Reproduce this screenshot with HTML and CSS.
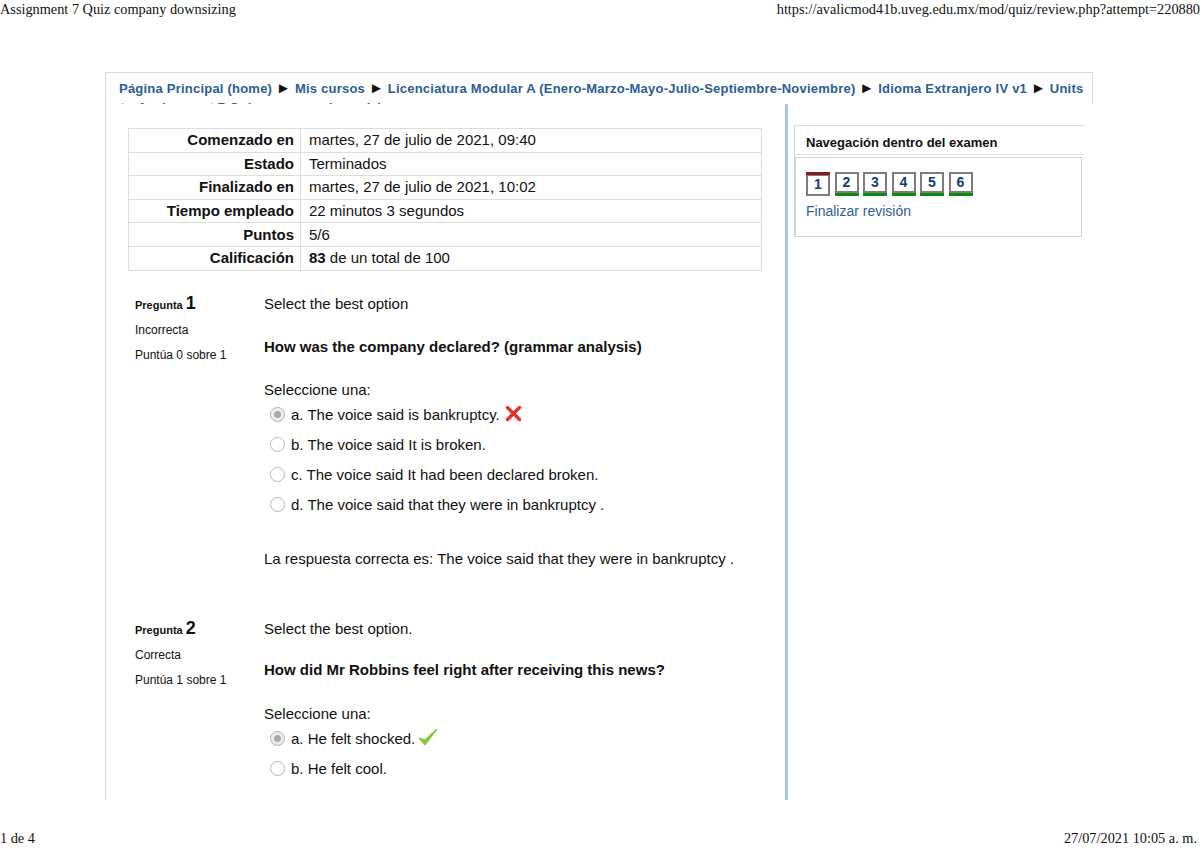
FILE: index.html
```html
<!DOCTYPE html>
<html lang="es">
<head>
<meta charset="utf-8">
<title>Assignment 7 Quiz company downsizing</title>
<link rel="stylesheet" href="styles.css">
</head>
<body>
<div class="print-head">
  <span>Assignment 7 Quiz company downsizing</span>
  <span class="url">https://avalicmod41b.uveg.edu.mx/mod/quiz/review.php?attempt=220880</span>
</div>

<div class="page">
  <div class="crumbs-wrap">
    <div class="crumbs">
      <a>Página Principal (home)</a> <span class="sep">►</span> <a>Mis cursos</a> <span class="sep">►</span> <a>Licenciatura Modular A (Enero-Marzo-Mayo-Julio-Septiembre-Noviembre)</a> <span class="sep">►</span> <a>Idioma Extranjero IV v1</a> <span class="sep">►</span> <a>Units</a> <span class="last"><span class="sep">►</span> <a>Assignment 7 Quiz company downsizing</a></span>
    </div>
  </div>

  <div class="content">
    <div class="main">
      <table class="summary">
        <tr><th>Comenzado en</th><td>martes, 27 de julio de 2021, 09:40</td></tr>
        <tr><th>Estado</th><td>Terminados</td></tr>
        <tr><th>Finalizado en</th><td>martes, 27 de julio de 2021, 10:02</td></tr>
        <tr><th>Tiempo empleado</th><td>22 minutos 3 segundos</td></tr>
        <tr><th>Puntos</th><td>5/6</td></tr>
        <tr><th>Calificación</th><td><b>83</b> de un total de 100</td></tr>
      </table>

      <div class="question q1">
        <div class="info">
          <div class="qno">Pregunta <span class="num">1</span></div>
          <div class="state">Incorrecta</div>
          <div class="grade">Puntúa 0 sobre 1</div>
        </div>
        <div class="formulation">
          <div class="qtext">Select the best option</div>
          <div class="qbold">How was the company declared? (grammar analysis)</div>
          <div class="prompt">Seleccione una:</div>
          <div class="answers">
            <div class="opt"><span class="radio checked"></span><span>a. The voice said is bankruptcy.</span>
              <svg class="mark" width="17" height="17" viewBox="0 0 17 17"><path d="M2.5 2.5 L14.5 14.5 M14.5 2.5 L2.5 14.5" stroke="#e8322e" stroke-width="3.4" stroke-linecap="round" fill="none"/></svg>
            </div>
            <div class="opt"><span class="radio"></span><span>b. The voice said It is broken.</span></div>
            <div class="opt"><span class="radio"></span><span>c. The voice said It had been declared broken.</span></div>
            <div class="opt"><span class="radio"></span><span>d. The voice said that they were in bankruptcy .</span></div>
          </div>
          <div class="right-answer">La respuesta correcta es: The voice said that they were in bankruptcy .</div>
        </div>
      </div>

      <div class="question q2">
        <div class="info">
          <div class="qno">Pregunta <span class="num">2</span></div>
          <div class="state">Correcta</div>
          <div class="grade">Puntúa 1 sobre 1</div>
        </div>
        <div class="formulation">
          <div class="qtext">Select the best option.</div>
          <div class="qbold">How did Mr Robbins feel right after receiving this news?</div>
          <div class="prompt">Seleccione una:</div>
          <div class="answers">
            <div class="opt"><span class="radio checked"></span><span>a. He felt shocked.</span>
              <svg class="mark check" width="20" height="19" viewBox="0 0 20 19"><path d="M1.5 10.5 L7 16.5 L18.5 1.5 L7 12 Z" fill="#8cc63f" stroke="#8cc63f" stroke-width="1.5" stroke-linejoin="round"/></svg>
            </div>
            <div class="opt"><span class="radio"></span><span>b. He felt cool.</span></div>
          </div>
        </div>
      </div>
    </div>

    <div class="side">
      <div class="block">
        <div class="block-head">Navegación dentro del examen</div>
        <div class="block-body">
          <div class="navbtns">
            <span class="qbtn wrong"><span>1</span></span>
            <span class="qbtn ok"><span>2</span></span>
            <span class="qbtn ok"><span>3</span></span>
            <span class="qbtn ok"><span>4</span></span>
            <span class="qbtn ok"><span>5</span></span>
            <span class="qbtn ok"><span>6</span></span>
          </div>
          <a class="finish">Finalizar revisión</a>
        </div>
      </div>
    </div>
  </div>
</div>

<div class="print-foot">
  <span>1 de 4</span>
  <span class="date">27/07/2021 10:05 a. m.</span>
</div>
</body>
</html>
```

FILE: styles.css
```css
html, body {
  margin: 0;
  padding: 0;
  background: #fff;
}
body {
  width: 1200px;
  height: 848px;
  overflow: hidden;
  font-family: "Liberation Sans", Arial, sans-serif;
  color: #111;
}

.print-head, .print-foot {
  font-family: "Liberation Serif", "Times New Roman", serif;
  font-size: 14.3px;
  color: #111;
  display: flex;
  justify-content: space-between;
  white-space: nowrap;
  height: 20px;
  line-height: 20px;
}
.print-head { margin-top: -1px; }
.print-foot {
  margin-top: 28px;
  padding-right: 3px;
}

.page {
  margin: 53px 0 0 105px;
  width: 988px;
  height: 728px;
  border-top: 1px solid #dcd9cf;
  border-left: 1px solid #dcd9cf;
  box-sizing: border-box;
  display: flex;
  flex-direction: column;
}

.crumbs-wrap {
  height: 31px;
  border-right: 1px solid #dcd9cf;
  overflow: hidden;
  padding: 6px 0 0 13px;
  box-sizing: border-box;
}
.crumbs {
  width: 975px;
  font-size: 13px;
  font-weight: bold;
  line-height: 18px;
  letter-spacing: 0.22px;
  color: #2a5d96;
}
.crumbs a { color: #2a5d96; }
.crumbs .sep { color: #111; font-size: 15px; }
.crumbs .last { white-space: nowrap; }

.content {
  flex: 1;
  display: flex;
}

.main {
  width: 657px;
  border-right: 3px solid #a8c5e0;
  padding: 24px 0 0 22px;
}

.summary {
  width: 634px;
  border-collapse: collapse;
  font-size: 15px;
}
.summary th, .summary td {
  border: 1px solid #dedede;
  height: 22.6px;
  padding: 0;
  line-height: 22px;
}
.summary th {
  width: 165px;
  text-align: right;
  padding-right: 6px;
  font-weight: bold;
}
.summary td {
  padding-left: 8px;
}

.question {
  display: flex;
}
.q1 { margin-top: 20px; }
.q2 { margin-top: 47px; }

.info {
  width: 136px;
  flex: none;
  padding-left: 7px;
  box-sizing: border-box;
  font-size: 12px;
  line-height: 25px;
}
.qno { font-weight: bold; font-size: 11px; }
.qno .num { font-size: 18px; }

.formulation {
  font-size: 15px;
  line-height: 20px;
}
.qtext { margin-top: 2px; line-height: 22px; }
.qbold { font-weight: bold; margin-top: 22px; }
.prompt { margin-top: 23px; }
.q2 .qbold { margin-top: 20px; }
.q2 .prompt { margin-top: 24px; }

.answers {
  padding-left: 6px;
}
.opt {
  height: 30px;
  display: flex;
  align-items: center;
}
.radio {
  width: 13px;
  height: 13px;
  border: 1px solid #b9b9b9;
  border-radius: 50%;
  background: #fff;
  margin-right: 6px;
  position: relative;
  flex: none;
}
.radio.checked {
  background: #eee;
  border-color: #b0b0b0;
}
.radio.checked::after {
  content: "";
  position: absolute;
  left: 3px;
  top: 3px;
  width: 7px;
  height: 7px;
  border-radius: 50%;
  background: #a9a9a9;
}
.mark { margin-left: 5px; margin-top: -3px; }
.mark.check { margin-left: 3px; margin-top: -3px; }

.right-answer { margin-top: 29px; }

.side {
  padding: 21px 0 0 6px;
}
.block {
  width: 289px;
  border-top: 1px solid #dcdcdc;
  border-left: 1px solid #d2d2d2;
}
.block-head {
  height: 28px;
  line-height: 33px;
  padding-left: 11px;
  font-size: 13px;
  font-weight: bold;
  border-bottom: 1px solid #dddddd;
}
.block-body {
  margin-top: 2px;
  height: 80px;
  border: 1px solid #d2d2d2;
  border-left-width: 2px;
  margin-left: -1px;
  padding: 14px 0 0 10px;
  box-sizing: border-box;
  width: 288px;
}
.navbtns {
  display: flex;
  gap: 4.5px;
}
.qbtn {
  width: 24px;
  height: 24px;
  box-sizing: border-box;
  display: flex;
  flex-direction: column;
}
.qbtn span {
  flex: 1;
  border: 2px solid #7d7d7d;
  background: #fff;
  color: #123e70;
  font-weight: bold;
  font-size: 14px;
  text-align: center;
  line-height: 17px;
}
.qbtn.ok { border-bottom: 3px solid #0a8a0a; }
.qbtn.wrong { border-top: 3px solid #8b1a1a; }
.qbtn.wrong span { border-top-width: 1px; }

.finish {
  display: block;
  margin-top: 5px;
  font-size: 14px;
  line-height: 20px;
  color: #2f5f90;
}
```
